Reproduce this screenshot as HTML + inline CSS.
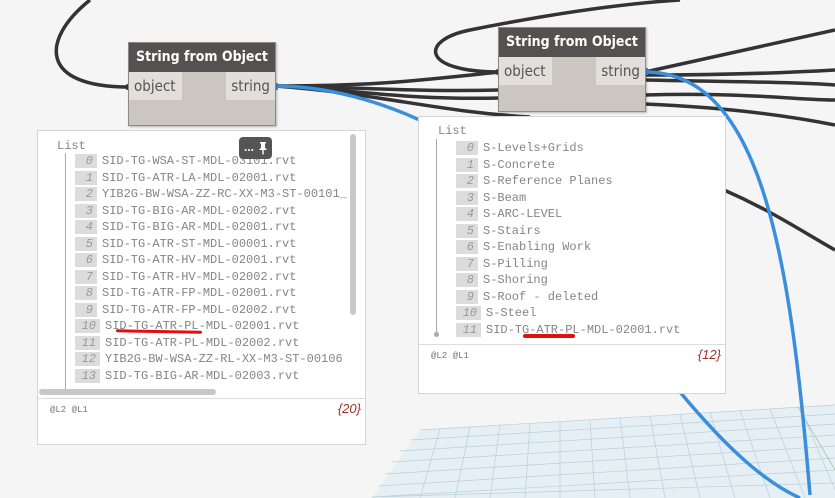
<!DOCTYPE html>
<html><head><style>
body{margin:0;width:835px;height:498px;overflow:hidden;background:#f5f5f5;position:relative;font-family:"Liberation Sans",sans-serif}
svg{position:absolute;left:0;top:0}
.node{position:absolute;background:#cbc6bf;border:1px solid #8d8a85;box-shadow:1px 1px 2px rgba(0,0,0,.25)}
.hd{background:#545150;color:#fff;font-weight:bold;font-size:14px;height:29px;line-height:29px;text-align:center;font-family:"DejaVu Sans Condensed","Liberation Sans Narrow","Liberation Sans",sans-serif}
.port{position:absolute;top:29px;height:28px;line-height:28px;background:#e2dfda;color:#555;font-size:15px;padding:0 5px;font-family:"DejaVu Sans Condensed","Liberation Sans Narrow","Liberation Sans",sans-serif}
.panel{position:absolute;background:#fff;border:1px solid #d6d6d6}
.mono{font-family:"Liberation Mono",monospace;font-size:12px;color:#858585}
.row{position:absolute;height:14px;line-height:14px;white-space:nowrap}
.ix{display:inline-block;width:22px;background:#dcdcdc;color:#999;font-style:italic;text-align:right;padding-right:4px;box-sizing:border-box;margin-right:5px}
.ix2{width:25px}
.foot{position:absolute;left:0;right:0;border-top:1px solid #ddd;bottom:0;background:#fff}
.lvl{position:absolute;left:12px;top:6px;font-size:9px;color:#777;font-family:"Liberation Mono",monospace}
.cnt{position:absolute;right:4px;top:2px;font-size:13px;color:#a03030;font-style:italic;font-family:"Liberation Sans",sans-serif}
</style></head><body>
<svg width="835" height="498">
 <g stroke="#b9d0db" stroke-width="0.7">
  <polygon points="420,430 835,405 835,498 372,498" fill="#e6eff4" stroke="none"/>
  <line x1="420" y1="430" x2="835" y2="405"/><line x1="410" y1="440" x2="835" y2="414"/><line x1="400" y1="451" x2="835" y2="424"/><line x1="392" y1="462" x2="835" y2="435"/><line x1="385" y1="474" x2="835" y2="446"/><line x1="378" y1="486" x2="835" y2="458"/><line x1="372" y1="497" x2="835" y2="470"/><line x1="372" y1="497" x2="835" y2="483"/>
  <line x1="440" y1="429" x2="420" y2="498"/><line x1="470" y1="427" x2="455" y2="498"/><line x1="500" y1="425" x2="490" y2="498"/><line x1="530" y1="423" x2="525" y2="498"/><line x1="560" y1="421" x2="560" y2="498"/><line x1="590" y1="420" x2="595" y2="498"/><line x1="620" y1="418" x2="630" y2="498"/><line x1="650" y1="416" x2="665" y2="498"/><line x1="680" y1="414" x2="700" y2="498"/><line x1="710" y1="412" x2="735" y2="498"/><line x1="740" y1="410" x2="770" y2="498"/><line x1="770" y1="409" x2="805" y2="498"/><line x1="800" y1="407" x2="835" y2="490"/>
  <line x1="798" y1="407" x2="835" y2="470" stroke="#8fc28f"/>
 </g>
 <g fill="none" stroke="#333" stroke-width="3.5">
  <path d="M128,87 C40,87 40,40 90,0"/>
  <path d="M500,72 C420,72 420,40 470,30 C520,20 600,5 680,0"/>
  <path d="M276,86 C380,86 420,80 500,72"/>
  <path d="M276,86 C380,88 420,92 500,90"/>
  <path d="M276,86 C360,90 400,100 500,98"/>
  <path d="M276,86 C380,94 440,112 530,117"/>
  <path d="M645,72 C720,55 790,40 835,30"/>
  <path d="M645,75 C740,75 800,72 835,70"/>
  <path d="M645,80 C740,82 800,82 835,85"/>
  <path d="M645,95 C740,92 800,100 835,100"/>
  <path d="M645,104 C740,108 800,118 835,125"/>
  <path d="M724,190 C770,210 800,230 835,250"/>
 </g>
 <g fill="none" stroke="#3a8fdc" stroke-width="3.5">
  <path d="M276,86 C340,86 400,110 430,125"/>
  <path d="M645,72 C760,72 790,250 810,495"/>
  <path d="M680,392 C720,440 760,480 800,498"/>
 </g>
 <circle cx="128" cy="87" r="3" fill="#333"/><circle cx="498" cy="72" r="3" fill="#333"/>
 <rect x="274" y="83" width="4" height="7" fill="#3a8fdc"/><rect x="644" y="68" width="4" height="7" fill="#3a8fdc"/>
</svg>

<div class="node" style="left:128px;top:42px;width:146px;height:82px"><div class="hd">String from Object</div>
 <div class="port" style="left:0;width:43px">object</div><div class="port" style="right:0;text-align:right">string</div></div>
<div class="node" style="left:498px;top:27px;width:146px;height:83px"><div class="hd">String from Object</div>
 <div class="port" style="left:0;width:43px">object</div><div class="port" style="right:0;text-align:right">string</div></div>

<div class="panel mono" style="left:37px;top:130px;width:327px;height:313px">
 <div class="row" style="left:19px;top:8px">List</div>
 <div style="position:absolute;left:27px;top:22px;width:1px;height:240px;background:#aaa"></div>
 <div class="row" style="left:37px;top:23px"><span class="ix">0</span>SID-TG-WSA-ST-MDL-03101.rvt</div>
 <div class="row" style="left:37px;top:39.5px"><span class="ix">1</span>SID-TG-ATR-LA-MDL-02001.rvt</div>
 <div class="row" style="left:37px;top:56px"><span class="ix">2</span>YIB2G-BW-WSA-ZZ-RC-XX-M3-ST-00101_</div>
 <div class="row" style="left:37px;top:72.5px"><span class="ix">3</span>SID-TG-BIG-AR-MDL-02002.rvt</div>
 <div class="row" style="left:37px;top:89px"><span class="ix">4</span>SID-TG-BIG-AR-MDL-02001.rvt</div>
 <div class="row" style="left:37px;top:105.5px"><span class="ix">5</span>SID-TG-ATR-ST-MDL-00001.rvt</div>
 <div class="row" style="left:37px;top:122px"><span class="ix">6</span>SID-TG-ATR-HV-MDL-02001.rvt</div>
 <div class="row" style="left:37px;top:138.5px"><span class="ix">7</span>SID-TG-ATR-HV-MDL-02002.rvt</div>
 <div class="row" style="left:37px;top:155px"><span class="ix">8</span>SID-TG-ATR-FP-MDL-02001.rvt</div>
 <div class="row" style="left:37px;top:171.5px"><span class="ix">9</span>SID-TG-ATR-FP-MDL-02002.rvt</div>
 <div class="row" style="left:37px;top:188px"><span class="ix ix2">10</span>SID-TG-ATR-PL-MDL-02001.rvt</div>
 <div class="row" style="left:37px;top:204.5px"><span class="ix ix2">11</span>SID-TG-ATR-PL-MDL-02002.rvt</div>
 <div class="row" style="left:37px;top:221px"><span class="ix ix2">12</span>YIB2G-BW-WSA-ZZ-RL-XX-M3-ST-00106</div>
 <div class="row" style="left:37px;top:237.5px"><span class="ix ix2">13</span>SID-TG-BIG-AR-MDL-02003.rvt</div>
 <div style="position:absolute;left:78px;top:199px;width:86px;height:3px;background:#e01010;border-radius:2px;transform:rotate(1deg)"></div>
 <div style="position:absolute;left:312px;top:3px;width:6px;height:181px;background:#c8c8c8;border-radius:3px"></div>
 <div style="position:absolute;left:1px;top:258px;width:177px;height:6px;background:#c8c8c8;border-radius:3px"></div>
 <div style="position:absolute;left:201px;top:6px;width:33px;height:22px;background:#555;border-radius:4px">
  <span style="position:absolute;left:5px;top:3px;color:#fff;font:bold 12px 'Liberation Sans',sans-serif">...</span>
  <svg width="12" height="14" style="left:18px;top:4px"><path d="M3,1h6v1.5h-1v4l2,2.5h-8l2-2.5v-4h-1z M5.3,9h1.4v4.5h-1.4z" fill="#fff"/></svg>
 </div>
 <div class="foot" style="height:45px"><span class="lvl">@L2 @L1</span><span class="cnt">{20}</span></div>
</div>

<div class="panel mono" style="left:418px;top:116px;width:306px;height:276px">
 <div class="row" style="left:19px;top:7px">List</div>
 <div style="position:absolute;left:17px;top:22px;width:1px;height:195px;background:#aaa"></div>
 <div style="position:absolute;left:15px;top:215px;width:5px;height:5px;border-radius:3px;background:#aaa"></div>
 <div class="row" style="left:37px;top:24px"><span class="ix">0</span>S-Levels+Grids</div>
 <div class="row" style="left:37px;top:40.5px"><span class="ix">1</span>S-Concrete</div>
 <div class="row" style="left:37px;top:57px"><span class="ix">2</span>S-Reference Planes</div>
 <div class="row" style="left:37px;top:73.5px"><span class="ix">3</span>S-Beam</div>
 <div class="row" style="left:37px;top:90px"><span class="ix">4</span>S-ARC-LEVEL</div>
 <div class="row" style="left:37px;top:106.5px"><span class="ix">5</span>S-Stairs</div>
 <div class="row" style="left:37px;top:123px"><span class="ix">6</span>S-Enabling Work</div>
 <div class="row" style="left:37px;top:139.5px"><span class="ix">7</span>S-Pilling</div>
 <div class="row" style="left:37px;top:156px"><span class="ix">8</span>S-Shoring</div>
 <div class="row" style="left:37px;top:172.5px"><span class="ix">9</span>S-Roof - deleted</div>
 <div class="row" style="left:37px;top:189px"><span class="ix ix2">10</span>S-Steel</div>
 <div class="row" style="left:37px;top:205.5px"><span class="ix ix2">11</span>SID-TG-ATR-PL-MDL-02001.rvt</div>
 <div style="position:absolute;left:104px;top:217px;width:52px;height:4px;background:#e01010;border-radius:2px"></div>
 <div class="foot" style="height:48px"><span class="lvl">@L2 @L1</span><span class="cnt">{12}</span></div>
</div>
</body></html>
